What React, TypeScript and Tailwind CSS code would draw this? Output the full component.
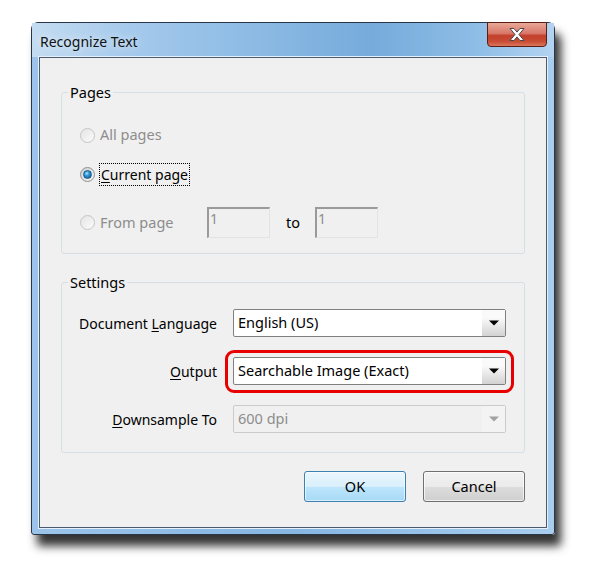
import React from "react";

const FONT = { fontFamily: '"Noto Sans", "Open Sans", Arial, sans-serif' };

function Radio({ checked, disabled }: { checked?: boolean; disabled?: boolean }) {
  return (
    <div
      className={`flex h-[15px] w-[15px] shrink-0 items-center justify-center rounded-full border ${
        disabled
          ? "border-[#c6c6c6] bg-gradient-to-br from-[#e4e4e4] to-[#fbfbfb]"
          : "border-[#8e8f8f] bg-gradient-to-br from-[#d0d0d0] to-[#f6f6f6]"
      }`}
    >
      {checked && (
        <div className="h-[9px] w-[9px] rounded-full border border-[#1c5b86] bg-[radial-gradient(circle_at_40%_35%,#b8e6ff_0%,#2f9be0_35%,#0b4f80_100%)]" />
      )}
    </div>
  );
}

function NumBox() {
  return (
    <div className="h-[31px] w-[63px] border-l-2 border-t-2 border-r border-b border-l-[#9a9a9a] border-t-[#9a9a9a] border-r-[#e3e3e3] border-b-[#e3e3e3] bg-[#f0f0f0] pl-[1px] text-[14px] leading-[20px] text-[#8d8d8d]">
      1
    </div>
  );
}

function Select({ value, disabled }: { value: string; disabled?: boolean }) {
  return (
    <div
      className={`flex h-[28px] w-[273px] items-stretch rounded-[2px] border ${
        disabled ? "border-[#cbcbcb] bg-[#f0f0f0] text-[#8d8d8d]" : "border-[#808080] bg-white text-black"
      }`}
    >
      <div className="flex flex-1 items-center pl-[4px] text-[14.5px]">{value}</div>
      <div
        className={`flex w-[23px] items-center justify-center ${
          disabled ? "bg-[#f3f3f3]" : "bg-gradient-to-b from-[#fafafa] from-30% to-[#d2d2d2]"
        }`}
      >
        <svg width="10" height="6" viewBox="0 0 10 6">
          <path d="M0 0.5h10L5 5.5z" fill={disabled ? "#a2a2a2" : "#000"} />
        </svg>
      </div>
    </div>
  );
}

export default function App() {
  return (
    <div className="min-h-[574px] w-[600px] bg-white pl-[31px] pt-[22px]" style={FONT}>
      <div className="relative w-[524px] rounded-t-[7px] rounded-b-[3px] border border-[#2a3646] bg-gradient-to-r from-[#9cc4ea] via-[#86b6e2] to-[#a8cdee] px-[7px] pb-[6px] shadow-[6px_11px_10px_rgba(0,0,0,0.8)]">
        {/* title bar */}
        <div className="-mx-[7px] flex h-[34px] items-center bg-[linear-gradient(90deg,#c4dcf1_0%,#a6caec_18%,#8fbce5_40%,#76abdb_65%,#8ebde6_85%,#b3d3f1_100%)] px-[8px] pt-[3px]">
          <span className="text-[14px] text-[#111] [text-shadow:0_0_8px_rgba(255,255,255,0.9)]">Recognize Text</span>
        </div>
        {/* close button */}
        <div className="absolute right-[7px] top-[-1px] flex h-[25px] w-[60px] items-center justify-center rounded-b-[4px] border border-[#5a1e15] bg-[linear-gradient(180deg,#e9a897_0%,#d8786a_45%,#c2402c_55%,#c94c34_80%,#d9765c_100%)]">
          <svg width="20" height="15" viewBox="0 0 20 15">
            <path
              d="M3 1.5h4l3 3.6 3-3.6h4l-5 6 5 6h-4l-3-3.6-3 3.6H3l5-6z"
              fill="#fff"
              stroke="#4a4a4a"
              strokeWidth="1"
              strokeLinejoin="round"
            />
          </svg>
        </div>

        {/* client area */}
        <div className="border border-[#4a5b70] bg-[#f0f0f0] px-[21px] pb-[25px] pt-[25px] shadow-[0_0_0_1px_#e6f0fa]">
          <fieldset className="rounded-[3px] border border-[#d5dfe5] p-0">
            <legend className="ml-[6px] px-[2px] text-[14.5px] leading-[18px] text-black">Pages</legend>
            <div className="flex flex-col pb-[15px] pl-[18px] pt-[21px]">
              <div className="flex h-[26px] items-center gap-[5px] text-[14.5px] text-[#8d8d8d]">
                <Radio disabled />
                <span>All pages</span>
              </div>
              <div className="mt-[13px] flex h-[26px] items-center gap-[4px] text-[14px] text-black">
                <Radio checked />
                <span className="border border-dotted border-black px-[1px] leading-[21px]">
                  <span className="underline underline-offset-2">C</span>urrent page
                </span>
              </div>
              <div className="mt-[20px] flex h-[31px] items-center text-[14.5px]">
                <Radio disabled />
                <span className="ml-[5px] w-[107px] text-[#8d8d8d]">From page</span>
                <NumBox />
                <span className="ml-[16px] w-[29px] text-black">to</span>
                <NumBox />
              </div>
            </div>
          </fieldset>

          <fieldset className="mt-[19px] rounded-[3px] border border-[#d5dfe5] p-0">
            <legend className="ml-[6px] px-[2px] text-[14.5px] leading-[18px] text-black">Settings</legend>
            <div className="grid grid-cols-[1fr_273px] items-center gap-x-[16px] gap-y-[20px] pb-[19px] pr-[18px] pt-[18px] text-[14px]">
              <div className="whitespace-nowrap text-right text-black">
                Document <span className="underline underline-offset-2">L</span>anguage
              </div>
              <Select value="English (US)" />
              <div className="whitespace-nowrap text-right text-black">
                <span className="underline underline-offset-2">O</span>utput
              </div>
              <div className="relative">
                <div className="pointer-events-none absolute -bottom-[8px] -left-[8px] -right-[8px] -top-[7px] rounded-[9px] border-[3px] border-[#e80000]" />
                <Select value="Searchable Image (Exact)" />
              </div>
              <div className="whitespace-nowrap text-right text-black">
                <span className="underline underline-offset-2">D</span>ownsample To
              </div>
              <Select value="600 dpi" disabled />
            </div>
          </fieldset>

          <div className="mt-[18px] flex justify-end gap-[17px]">
            <div className="flex h-[31px] w-[102px] items-center justify-center rounded-[3px] border border-[#3c7fb1] bg-[linear-gradient(180deg,#eaf6fd_0%,#d9f0fc_50%,#bee6fd_50%,#a7d9f5_100%)] text-[14.5px] text-black shadow-[inset_0_0_0_1px_rgba(255,255,255,0.6)]">
              OK
            </div>
            <div className="flex h-[31px] w-[102px] items-center justify-center rounded-[3px] border border-[#707070] bg-[linear-gradient(180deg,#f2f2f2_0%,#ebebeb_50%,#dddddd_50%,#cfcfcf_100%)] text-[14.5px] text-black shadow-[inset_0_0_0_1px_rgba(255,255,255,0.7)]">
              Cancel
            </div>
          </div>
        </div>
      </div>
    </div>
  );
}
